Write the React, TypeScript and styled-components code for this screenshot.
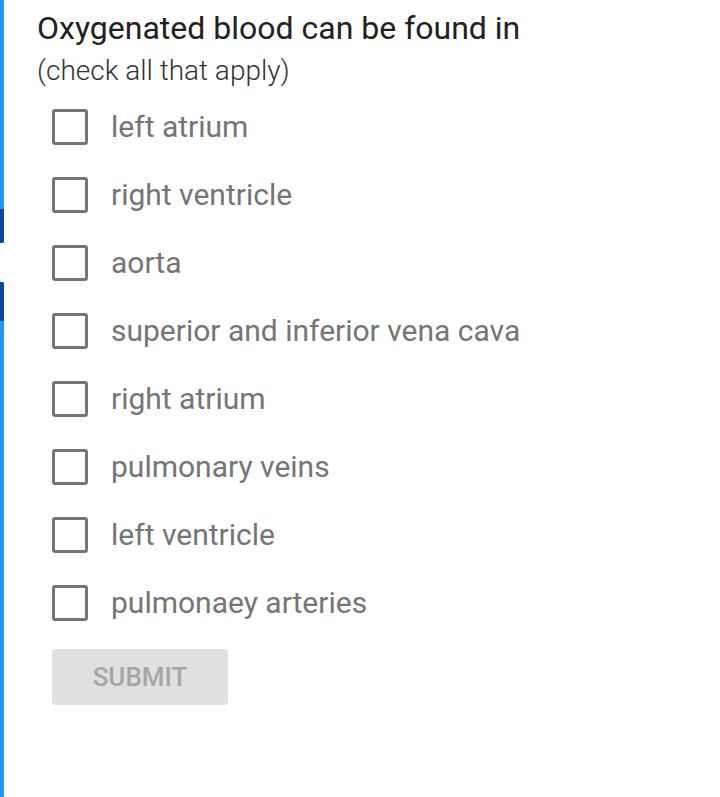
import React from "react";
import styled, { createGlobalStyle } from "styled-components";

const Global = createGlobalStyle`
  html, body { margin: 0; padding: 0; background: #fff; }
  body { font-family: Roboto, "Noto Sans", sans-serif; }
`;

const Page = styled.div`
  display: flex;
  min-height: 797px;
  width: 720px;
`;

const SideBar = styled.div`
  width: 4px;
  flex: none;
  display: flex;
  flex-direction: column;
  background: #2196f3;
`;

const BarSpacer = styled.div<{ $h: number }>`
  height: ${(p) => p.$h}px;
  flex: none;
`;

const BarDark = styled.div<{ $h: number; $pos: "top" | "bottom" }>`
  height: ${(p) => p.$h}px;
  background: #0d47a1;
  border-${(p) => (p.$pos === "top" ? "bottom-right" : "top-right")}-radius: 3px;
  flex: none;
`;

const BarGap = styled.div`
  height: 39px;
  background: #fff;
  flex: none;
`;

const Content = styled.div`
  flex: 1;
  padding: 8px 0 0 33px;
  display: flex;
  flex-direction: column;
`;

const Title = styled.h1`
  margin: 0;
  font-size: 32px;
  font-weight: 400;
  color: #212121;
  line-height: 40px;
`;

const Hint = styled.div`
  margin-top: 6px;
  font-size: 28px;
  color: #333;
  line-height: 34px;
  font-weight: 300;
`;

const List = styled.div`
  display: flex;
  flex-direction: column;
  margin-top: 5px;
  padding-left: 15px;
`;

const Row = styled.label`
  display: flex;
  align-items: center;
  height: 68px;
  gap: 23px;
  cursor: pointer;
`;

const Box = styled.span`
  width: 36px;
  height: 36px;
  box-sizing: border-box;
  border: 3px solid #757575;
  border-radius: 3px;
  flex: none;
`;

const Label = styled.span`
  font-size: 30px;
  line-height: 36px;
  color: #757575;
`;

const Submit = styled.button`
  margin: 12px 0 0 15px;
  width: 176px;
  height: 56px;
  border: none;
  border-radius: 3px;
  background: #e0e0e0;
  color: #a6a6a6;
  font-family: Roboto, sans-serif;
  font-size: 26px;
  font-weight: 500;
  align-self: flex-start;
`;

const options = [
  "left atrium",
  "right ventricle",
  "aorta",
  "superior and inferior vena cava",
  "right atrium",
  "pulmonary veins",
  "left ventricle",
  "pulmonaey arteries",
];

export default function App() {
  return (
    <Page>
      <Global />
      <SideBar>
        <BarSpacer $h={209} />
        <BarDark $h={34} $pos="top" />
        <BarGap />
        <BarDark $h={39} $pos="bottom" />
      </SideBar>
      <Content>
        <Title>Oxygenated blood can be found in</Title>
        <Hint>(check all that apply)</Hint>
        <List>
          {options.map((o) => (
            <Row key={o}>
              <Box />
              <Label>{o}</Label>
            </Row>
          ))}
        </List>
        <Submit disabled>SUBMIT</Submit>
      </Content>
    </Page>
  );
}
